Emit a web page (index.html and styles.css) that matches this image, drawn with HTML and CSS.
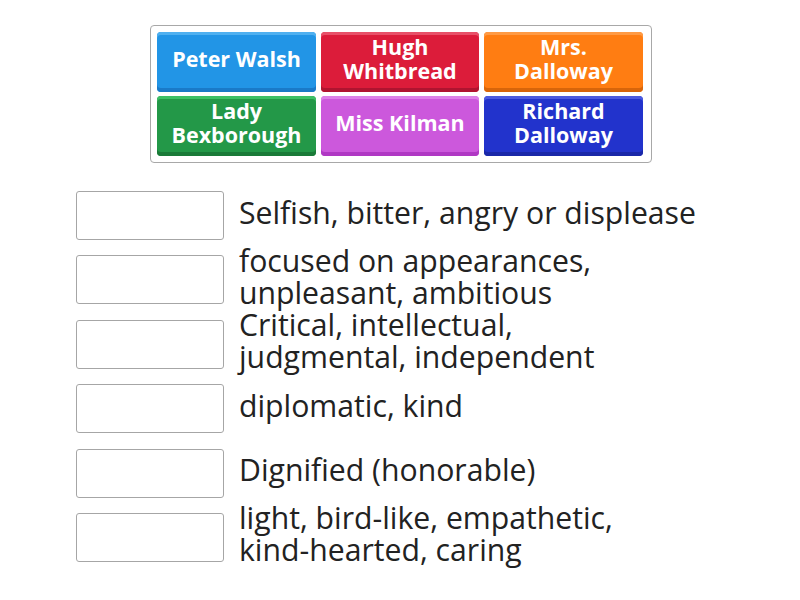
FILE: index.html
```html
<!DOCTYPE html>
<html>
<head>
<meta charset="utf-8">
<link rel="stylesheet" href="styles.css">
</head>
<body>
<div class="page">
  <div class="bank">
    <div class="tile blue">Peter Walsh</div>
    <div class="tile red">Hugh Whitbread</div>
    <div class="tile orange">Mrs. Dalloway</div>
    <div class="tile green">Lady Bexborough</div>
    <div class="tile pink">Miss Kilman</div>
    <div class="tile navy">Richard Dalloway</div>
  </div>
  <div class="rows">
    <div class="row"><div class="box"></div><div class="desc">Selfish, bitter, angry or displease</div></div>
    <div class="row"><div class="box"></div><div class="desc">focused on appearances,<br>unpleasant, ambitious</div></div>
    <div class="row"><div class="box"></div><div class="desc">Critical, intellectual,<br>judgmental, independent</div></div>
    <div class="row"><div class="box"></div><div class="desc">diplomatic, kind</div></div>
    <div class="row"><div class="box"></div><div class="desc">Dignified (honorable)</div></div>
    <div class="row"><div class="box"></div><div class="desc">light, bird-like, empathetic,<br>kind-hearted, caring</div></div>
  </div>
</div>
</body>
</html>
```
FILE: styles.css
```css
html, body {
  margin: 0;
  padding: 0;
  background: #ffffff;
}
body {
  font-family: "Open Sans", "Noto Sans", sans-serif;
  width: 800px;
  height: 600px;
  overflow: hidden;
}
.page {
  display: flex;
  flex-direction: column;
  align-items: flex-start;
  padding-top: 25px;
}
.bank {
  margin-left: 150px;
  width: 488px;
  border: 1px solid #a8a8a8;
  border-radius: 4px;
  padding: 6px;
  display: grid;
  grid-template-columns: 159px 158px 159px;
  grid-auto-rows: 60px;
  column-gap: 5px;
  row-gap: 4px;
}
.tile {
  display: flex;
  align-items: center;
  justify-content: center;
  text-align: center;
  color: #ffffff;
  font-weight: 700;
  font-size: 21.5px;
  line-height: 24px;
  border-radius: 4px;
  padding: 0 8px 6px;
}
.blue {
  background: #2295e6;
  box-shadow: inset 0 3px 0 #4fb0f0, inset 0 -4px 0 #1a7ac8;
}
.red {
  background: #dc1c3a;
  box-shadow: inset 0 3px 0 #e85068, inset 0 -4px 0 #b01430;
}
.orange {
  background: #ff7d12;
  box-shadow: inset 0 3px 0 #ff9a44, inset 0 -4px 0 #d8650a;
}
.green {
  background: #239848;
  box-shadow: inset 0 3px 0 #3cc066, inset 0 -4px 0 #1a7a38;
}
.pink {
  background: #cc58dc;
  box-shadow: inset 0 3px 0 #dc80e8, inset 0 -4px 0 #b038c4;
}
.navy {
  background: #2233cc;
  box-shadow: inset 0 3px 0 #4a5ae0, inset 0 -4px 0 #1a28a8;
}
.rows {
  margin-top: 28px;
  margin-left: 76px;
  display: flex;
  flex-direction: column;
  gap: 15.4px;
}
.row {
  display: flex;
  align-items: center;
  height: 49px;
}
.box {
  width: 146px;
  height: 47px;
  border: 1px solid #a6a6a6;
  border-radius: 3px;
  flex: none;
}
.desc {
  margin-left: 15px;
  margin-top: -6px;
  font-size: 30.2px;
  line-height: 32px;
  color: #222222;
  white-space: nowrap;
}
```
